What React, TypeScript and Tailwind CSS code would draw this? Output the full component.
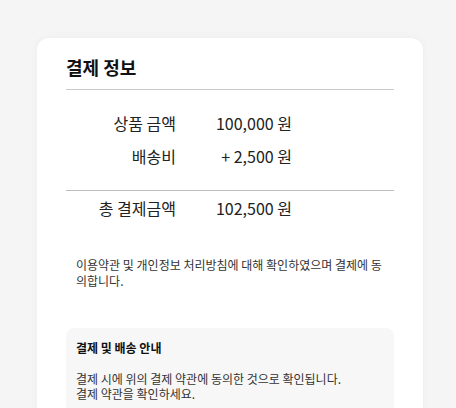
import React from 'react'

const font = { fontFamily: '"Noto Sans CJK KR", "Noto Sans", sans-serif' }

const rows = [
	{ label: '상품 금액', value: '100,000 원' },
	{ label: '배송비', value: '+ 2,500 원' },
]

const App = () => {
	return (
		<div className="w-[456px] h-[408px] overflow-hidden bg-[#f5f5f5] pt-[38px]" style={font}>
			<div className="ml-[37px] w-[386px] min-h-[400px] bg-white rounded-[12px] shadow-[0_0_8px_rgba(0,0,0,0.04)] px-[29px] pt-[16px]">
				<h2 className="text-[18px] leading-[27px] font-bold text-[#111] pb-[8px] border-b border-[#c8c8c8]">결제 정보</h2>

				<div className="pt-[21px] pb-[22px] flex flex-col gap-[9px]">
					{rows.map((row) => (
						<div key={row.label} className="flex text-[16px] leading-[24px] text-[#222]">
							<span className="w-[110px] text-right">{row.label}</span>
							<span className="w-[116px] text-right">{row.value}</span>
						</div>
					))}
				</div>

				<div className="border-t border-[#bdbdbd] pt-[5px] flex text-[16px] leading-[24px] text-[#222]">
					<span className="w-[110px] text-right">총 결제금액</span>
					<span className="w-[116px] text-right">102,500 원</span>
				</div>

				<p className="mt-[37px] px-[10px] text-[12px] leading-[16px] text-[#333]">
					이용약관 및 개인정보 처리방침에 대해 확인하였으며 결제에 동의합니다.
				</p>

				<div className="mt-[39px] bg-[#f7f7f7] rounded-[8px] px-[10px] pt-[12px] pb-[16px]">
					<h3 className="text-[12px] leading-[16px] font-bold text-[#111]">결제 및 배송 안내</h3>
					<p className="mt-[15px] text-[12px] leading-[15px] text-[#333]">
						결제 시에 위의 결제 약관에 동의한 것으로 확인됩니다.
						<br />
						결제 약관을 확인하세요.
					</p>
				</div>
			</div>
		</div>
	)
}

export default App
